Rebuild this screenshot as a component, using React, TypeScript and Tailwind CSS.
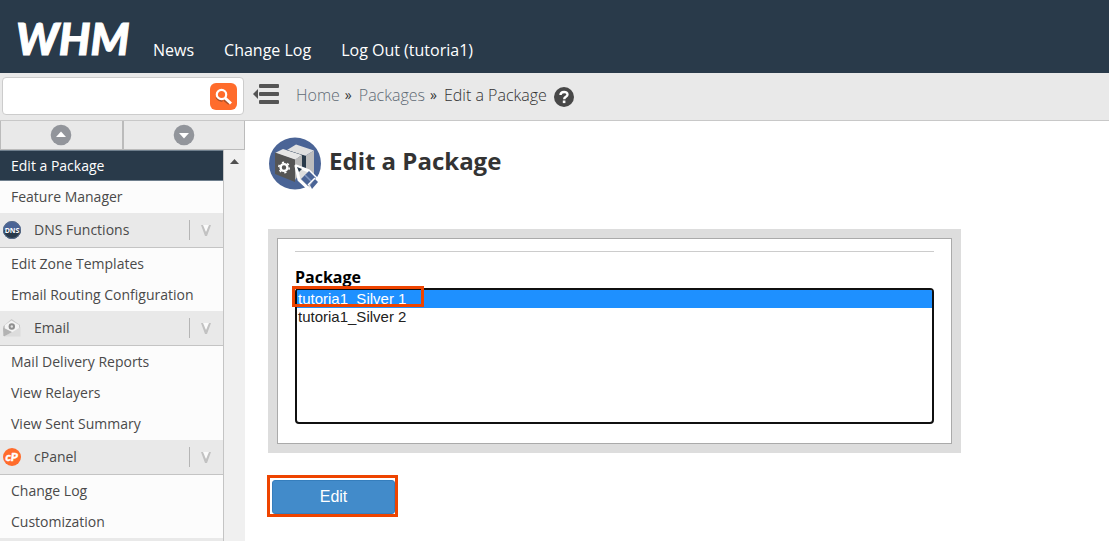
import React, { useState } from "react";
import clsx from "clsx";

const navLinks = ["News", "Change Log", "Log Out (tutoria1)"];

const packages = ["tutoria1_Silver 1", "tutoria1_Silver 2"];

const DnsIcon = () => (
  <svg width="18" height="18" viewBox="0 0 18 18" aria-hidden="true">
    <circle cx="9" cy="9" r="9" fill="#4a6496" />
    <path d="M0 9a9 9 0 0 0 18 0z" fill="#293a4a" />
    <circle cx="9" cy="9" r="8.5" fill="none" stroke="#5b6f8c" />
    <text
      x="9"
      y="11.5"
      textAnchor="middle"
      fontSize="7"
      fontWeight="700"
      fill="#fff"
      fontFamily="Open Sans, sans-serif"
    >
      DNS
    </text>
  </svg>
);

const EmailIcon = () => (
  <svg width="18" height="18" viewBox="0 0 18 18" aria-hidden="true">
    <path d="M0 7.5 8.500 0 17 6v11H0z" fill="#c9c9c9" />
    <path d="M2 6 8.500 1.500 16 6v4l-6 4-8-4z" fill="#f4f4f4" />
    <path d="M0 8.500 9 13 1 17.500z" fill="#b3b3b3" />
    <path d="m17.500 8-8 5L1 17.500h16.500z" fill="#dcdcdc" />
    <circle cx="8.800" cy="7.500" r="3.200" fill="#8f8f8f" />
    <circle cx="8.800" cy="7.500" r="1.200" fill="#e2e2e2" />
  </svg>
);

const CpanelIcon = () => (
  <svg width="18" height="18" viewBox="0 0 18 18" aria-hidden="true">
    <circle cx="9" cy="9" r="9" fill="#ff6c2c" />
    <text
      x="8.7"
      y="13"
      textAnchor="middle"
      fontSize="12"
      fontWeight="900"
      fontStyle="italic"
      fill="#fff"
      stroke="#fff"
      strokeWidth="0.4"
      fontFamily="Lato, sans-serif"
    >
      cP
    </text>
  </svg>
);

const menu = [
  { title: "", icon: null, items: ["Edit a Package", "Feature Manager"] },
  {
    title: "DNS Functions",
    icon: DnsIcon,
    items: ["Edit Zone Templates", "Email Routing Configuration"],
  },
  {
    title: "Email",
    icon: EmailIcon,
    items: ["Mail Delivery Reports", "View Relayers", "View Sent Summary"],
  },
  { title: "cPanel", icon: CpanelIcon, items: ["Change Log", "Customization"] },
];

function PackageIcon() {
  return (
    <svg width="52" height="54" viewBox="0 0 52 54" aria-hidden="true">
      <circle cx="26" cy="26.5" r="26" fill="#4a6496" />
      {/* back box */}
      <path d="m18 13 9-5.500 18 6-9 5.500z" fill="#e0e0e0" />
      <path d="m36 19 9-5.500v24l-9 5z" fill="#bdbdbd" />
      {/* strap */}
      <path d="m18 13 19 6v12l-6-2V21l-15-5z" fill="#293a4a" />
      {/* front box */}
      <path d="m6 16 8-4 19 6-7 5z" fill="#e6e6e6" />
      <path d="M26 22.500 33 18v16l-7 9z" fill="#b8b8b8" />
      <path d="m6 15.500 20 7V45L6 37z" fill="#555" />
      <circle cx="15" cy="30.500" r="3.400" fill="none" stroke="#fff" strokeWidth="2.400" />
      <circle
        cx="15"
        cy="30.500"
        r="5.200"
        fill="none"
        stroke="#fff"
        strokeWidth="1.600"
        strokeDasharray="2.200 3.250"
      />
      {/* pencil */}
      <path
        d="m27 29 13 5 9 9-8 10-11-10z"
        fill="#dedede"
        stroke="#fff"
        strokeWidth="3"
        strokeLinejoin="round"
      />
      <path d="m28 30 5 2-3 3z" fill="#293a4a" />
      <path d="m40 34 7 7-8 8-7-7z" fill="#4a6496" />
      <path d="m36 38 7 7" stroke="#7f95bf" strokeWidth="1.500" />
      <path d="m41 48 5-6 3 3-6 7z" fill="#4a6496" />
      <path d="m39 48 7-7" stroke="#fff" strokeWidth="1.500" />
    </svg>
  );
}

function ScrollArrow({ down = false }: { down?: boolean }) {
  return (
    <svg width="22" height="22" viewBox="0 0 22 22" aria-hidden="true">
      <circle cx="11" cy="11" r="10.3" fill="#92959b" />
      <path d={down ? "M6 9h10l-5 5.5z" : "M6 13h10l-5-5.5z"} fill="#fff" />
    </svg>
  );
}

function Sidebar() {
  const [active, setActive] = useState("Edit a Package");

  return (
    <aside className="flex w-[245px] shrink-0 flex-col">
      <div className="flex h-[29px] shrink-0 border border-t-0 border-[#bbb] bg-[#e9e9e9]">
        <button
          aria-label="Scroll up"
          className="flex flex-1 items-center justify-center border-r border-[#bbb]"
        >
          <ScrollArrow />
        </button>
        <button
          aria-label="Scroll down"
          className="flex flex-1 items-center justify-center border-l border-[#bbb]"
        >
          <ScrollArrow down />
        </button>
      </div>

      <div className="flex min-h-0 flex-1">
        <nav className="flex-1 overflow-hidden border-r border-[#c4c4c4] bg-[#fcfcfc] text-sm text-[#4a4a4a]">
          {menu.map((group) => {
            const Icon = group.icon;
            return (
              <div key={group.title}>
                {Icon && (
                  <div className="flex h-[35px] items-center border-b border-[#c4c4c4] bg-[#e9e9e9] pr-3 pl-[3px]">
                    <Icon />
                    <span className="flex-1 pl-[13px]">{group.title}</span>
                    <button
                      aria-label={`Toggle ${group.title}`}
                      className="flex h-5 items-center border-l border-[#b5b5b5] pl-[11px]"
                    >
                      <svg width="10" height="11" viewBox="0 0 10 11" aria-hidden="true">
                        <path d="M0 0h3l2 6 2-6h3L6 11H4z" fill="#c2c2c2" />
                        <path d="M2 0h6L5 7z" fill="#fafafa" />
                      </svg>
                    </button>
                  </div>
                )}
                <ul className="pb-px">
                  {group.items.map((item) => (
                    <li key={item}>
                      <a
                        href="#"
                        onClick={() => setActive(item)}
                        className={clsx(
                          "flex h-[31px] items-center pl-[11px]",
                          item === active && "border-y border-[#6f7f8d] bg-[#293a4a] text-white"
                        )}
                      >
                        {item}
                      </a>
                    </li>
                  ))}
                </ul>
              </div>
            );
          })}
          <div className="h-[35px] bg-[#e9e9e9]" />
        </nav>
        <div className="flex w-[21px] justify-center bg-[#f0f0f0] pt-[9px]">
          <svg width="9" height="5" viewBox="0 0 9 5" aria-hidden="true">
            <path d="M0 5h9L4.500 0z" fill="#505050" />
          </svg>
        </div>
      </div>
    </aside>
  );
}

export default function App() {
  const [selected, setSelected] = useState([packages[0]]);

  return (
    <div className="flex h-screen flex-col overflow-hidden bg-white font-['Open_Sans',sans-serif] text-[#333]">
      {/* Top bar */}
      <header className="flex h-[73px] shrink-0 items-end bg-[#293a4a] pl-4 text-white">
        <a
          href="#"
          className="w-[137px] pb-[11px] font-['Lato',sans-serif] text-[44px] leading-[48px] font-black italic [-webkit-text-stroke:1px_white]"
        >
          WHM
        </a>
        <nav className="flex gap-[30px] pb-[11px] text-base">
          {navLinks.map((link) => (
            <a key={link} href="#">
              {link}
            </a>
          ))}
        </nav>
      </header>

      {/* Search and breadcrumbs */}
      <div className="flex h-12 shrink-0 items-start border-b border-[#c8c8c8] bg-[#e9e9e9]">
        <div className="mt-1 ml-[2px] flex h-[38px] w-[242px] items-center rounded border border-[#ccc] bg-white pr-[6px]">
          <input
            type="text"
            aria-label="Search"
            className="h-full min-w-0 flex-1 px-2 text-sm outline-none"
          />
          <button
            aria-label="Search"
            className="flex size-[27px] items-center justify-center rounded-md bg-[#ff6c2c]"
          >
            <svg width="19" height="19" viewBox="0 0 19 19" fill="none" aria-hidden="true">
              <path d="m10 13 5 4M2.500 10a5 5 0 0 0 6 3.500" stroke="#a8502a" strokeWidth="2" />
              <circle cx="7.500" cy="7.500" r="4.700" stroke="#fff" strokeWidth="2.200" />
              <path d="m11 11 6 5.500" stroke="#fff" strokeWidth="3" />
            </svg>
          </button>
        </div>
        <button aria-label="Collapse menu" className="mt-[11px] ml-[9px]">
          <svg width="26" height="20" viewBox="0 0 26 20" fill="#555" aria-hidden="true">
            <path d="M5 5v10L0 10z" />
            <rect x="6" y="0" width="20" height="4" rx="1" />
            <rect x="6" y="8" width="20" height="4" rx="1" />
            <rect x="6" y="16" width="20" height="4" rx="1" />
          </svg>
        </button>
        <nav aria-label="Breadcrumb" className="ml-[17px] flex h-11 items-center text-base font-light">
          <a href="#" className="text-[#5f6a75]">
            Home
          </a>
          <span className="mr-[7px] ml-[5px] text-sm font-normal">»</span>
          <a href="#" className="text-[#5f6a75]">
            Packages
          </a>
          <span className="mr-[7px] ml-[5px] text-sm font-normal">»</span>
          <span>Edit a Package</span>
          <button aria-label="Help" className="mt-1 ml-[7px]">
            <svg width="20" height="20" viewBox="0 0 20 20" aria-hidden="true">
              <circle cx="10" cy="10" r="10" fill="#484848" />
              <path
                d="M6.500 8c0-4 7-4 7-.5 0 2.500-3.300 2.200-3.300 4.700"
                fill="none"
                stroke="#fff"
                strokeWidth="2.400"
              />
              <rect x="8.800" y="13.500" width="2.600" height="2.600" fill="#fff" />
            </svg>
          </button>
        </nav>
      </div>

      <div className="flex min-h-0 flex-1">
        <Sidebar />

        <main className="flex-1 overflow-hidden pt-4 pl-[23px]">
          <div className="flex items-center gap-2 pl-px">
            <PackageIcon />
            <h1 className="pb-[6px] text-2xl font-bold">Edit a Package</h1>
          </div>

          <form onSubmit={(e) => e.preventDefault()} className="mt-[38px]">
            <div className="max-w-[693px] border-[9px] border-[#ddd]">
              <div className="border border-[#aaa] px-[17px] pt-3 pb-[19px]">
                <hr className="border-[#ccc]" />
                <label
                  htmlFor="package"
                  className="mt-[14px] block leading-[22px] font-bold text-black"
                >
                  Package
                </label>
                <div className="relative">
                  <select
                    id="package"
                    multiple
                    value={selected}
                    onChange={(e) =>
                      setSelected(Array.from(e.target.selectedOptions, (option) => option.value))
                    }
                    className="block h-[136px] w-full overflow-hidden rounded border-2 border-[#101010] bg-white font-['Liberation_Sans',sans-serif] text-[15px] text-[#222] outline-none"
                  >
                    {packages.map((name) => (
                      <option
                        key={name}
                        value={name}
                        className="h-[18px] px-px py-0 leading-[18px] checked:bg-[#1e90ff] checked:bg-linear-to-r checked:from-[#1e90ff] checked:to-[#1e90ff] checked:text-white"
                      >
                        {name}
                      </option>
                    ))}
                  </select>
                  <div className="pointer-events-none absolute -top-[2px] -left-[3px] h-[21px] w-[132px] border-[3px] border-[#ee4400]" />
                </div>
              </div>
            </div>

            <div className="mt-[22px] -ml-px inline-block border-[3px] border-[#ee4400] pt-[2px] pl-[2px]">
              <button
                type="submit"
                className="block h-[34px] w-[123px] rounded-[3px] border border-[#357ebd] bg-[#428bca] font-['Liberation_Sans',sans-serif] text-base text-white"
              >
                Edit
              </button>
            </div>
          </form>
        </main>
      </div>
    </div>
  );
}
